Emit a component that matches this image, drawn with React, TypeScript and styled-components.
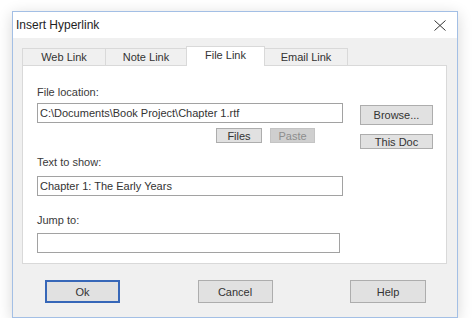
import React from 'react';
import styled, { createGlobalStyle } from 'styled-components';

const GlobalStyle = createGlobalStyle`
  html, body {
    margin: 0;
    background: #ffffff;
    font-family: "Liberation Sans", Arial, sans-serif;
    color: #333;
  }
`;

const Page = styled.div`
  padding: 11px 0 0 12px;
`;

const Window = styled.div`
  width: 446px;
  height: 307px;
  box-sizing: border-box;
  border: 1px solid #a3bfe5;
  background: #f0f0f0;
  box-shadow: 0 3px 14px rgba(0, 0, 0, 0.16);
  display: flex;
  flex-direction: column;
`;

const TitleBar = styled.div`
  height: 26px;
  flex-shrink: 0;
  background: #ffffff;
  display: flex;
  align-items: center;
  justify-content: space-between;
  padding: 0 11px 0 3px;
  font-size: 12px;
  color: #1e1e1e;
`;

const CloseIcon = styled.svg`
  width: 12px;
  height: 11px;
  display: block;
`;

const Body = styled.div`
  padding: 8px 10px 0 9px;
`;

const TabStrip = styled.div`
  display: flex;
  align-items: flex-end;
  height: 19px;
  position: relative;
  z-index: 1;
`;

const Tab = styled.div<{ $w: number; $active?: boolean }>`
  width: ${(p) => p.$w}px;
  height: ${(p) => (p.$active ? 20 : 17)}px;
  margin-bottom: ${(p) => (p.$active ? -1 : 0)}px;
  margin-right: -1px;
  box-sizing: border-box;
  border: 1px solid #d9d9d9;
  border-bottom: none;
  background: ${(p) => (p.$active ? '#ffffff' : '#f0f0f0')};
  font-size: 11px;
  display: flex;
  align-items: center;
  justify-content: center;
  padding-bottom: ${(p) => (p.$active ? 3 : 0)}px;
  color: #333;
`;

const Panel = styled.div`
  height: 199px;
  box-sizing: border-box;
  border: 1px solid #d9d9d9;
  background: #ffffff;
  padding: 19px 0 0 14px;
  display: flex;
  gap: 17px;
`;

const Column = styled.div<{ $w: number }>`
  width: ${(p) => p.$w}px;
  display: flex;
  flex-direction: column;
`;

const Label = styled.div<{ $mb: number }>`
  font-size: 11px;
  line-height: 15px;
  height: 15px;
  margin-bottom: ${(p) => p.$mb}px;
  color: #3a3a3a;
`;

const TextBox = styled.input<{ $w: number; $mb?: number }>`
  width: ${(p) => p.$w}px;
  height: 20px;
  box-sizing: border-box;
  border: 1px solid #a2a2a2;
  margin: 0 0 ${(p) => p.$mb ?? 0}px;
  padding: 0 2px;
  font: 11px "Liberation Sans", Arial, sans-serif;
  color: #333;
  background: #ffffff;
  outline: none;
`;

const FileButtons = styled.div`
  display: flex;
  gap: 8px;
  padding-left: 179px;
  margin-bottom: 12px;
`;

const SmallButton = styled.div<{ $w: number; $h?: number; $disabled?: boolean }>`
  width: ${(p) => p.$w}px;
  height: ${(p) => p.$h ?? 15}px;
  box-sizing: border-box;
  border: 1px solid ${(p) => (p.$disabled ? '#c4c4c4' : '#adadad')};
  background: ${(p) => (p.$disabled ? '#cfcfcf' : '#e1e1e1')};
  color: ${(p) => (p.$disabled ? '#8d8d8d' : '#333')};
  font-size: 11px;
  display: flex;
  align-items: center;
  justify-content: center;
`;

const SideButtons = styled(Column)`
  padding-top: 20px;
  gap: 9px;
`;

const Footer = styled.div`
  display: flex;
  justify-content: space-between;
  padding: 16px 31px 0 32px;
`;

const DialogButton = styled.div<{ $w: number; $default?: boolean }>`
  width: ${(p) => p.$w}px;
  height: 23px;
  box-sizing: border-box;
  border: ${(p) => (p.$default ? '2px solid #3767b8' : '1px solid #adadad')};
  background: #e1e1e1;
  font-size: 11px;
  color: #333;
  display: flex;
  align-items: center;
  justify-content: center;
`;

const tabs = [
  { name: 'Web Link', w: 84 },
  { name: 'Note Link', w: 82 },
  { name: 'File Link', w: 79, active: true },
  { name: 'Email Link', w: 84 },
];

export default function App() {
  return (
    <>
      <GlobalStyle />
      <Page>
        <Window>
          <TitleBar>
            <span>Insert Hyperlink</span>
            <CloseIcon viewBox="0 0 12 11">
              <path d="M0.5 0.5 L11.5 10.5 M11.5 0.5 L0.5 10.5" stroke="#333" strokeWidth="1" fill="none" />
            </CloseIcon>
          </TitleBar>
          <Body>
            <TabStrip>
              {tabs.map((t) => (
                <Tab key={t.name} $w={t.w} $active={t.active}>
                  {t.name}
                </Tab>
              ))}
            </TabStrip>
            <Panel>
              <Column $w={306}>
                <Label $mb={3}>File location:</Label>
                <TextBox $w={306} $mb={5} readOnly value="C:\Documents\Book Project\Chapter 1.rtf" />
                <FileButtons>
                  <SmallButton $w={46}>Files</SmallButton>
                  <SmallButton $w={45} $disabled>Paste</SmallButton>
                </FileButtons>
                <Label $mb={6}>Text to show:</Label>
                <TextBox $w={306} $mb={17} readOnly value="Chapter 1: The Early Years" />
                <Label $mb={5}>Jump to:</Label>
                <TextBox $w={303} readOnly value="" />
              </Column>
              <SideButtons $w={73}>
                <SmallButton $w={73} $h={20}>Browse...</SmallButton>
                <SmallButton $w={73} $h={15}>This Doc</SmallButton>
              </SideButtons>
            </Panel>
          </Body>
          <Footer>
            <DialogButton $w={75} $default>Ok</DialogButton>
            <DialogButton $w={75}>Cancel</DialogButton>
            <DialogButton $w={76}>Help</DialogButton>
          </Footer>
        </Window>
      </Page>
    </>
  );
}
